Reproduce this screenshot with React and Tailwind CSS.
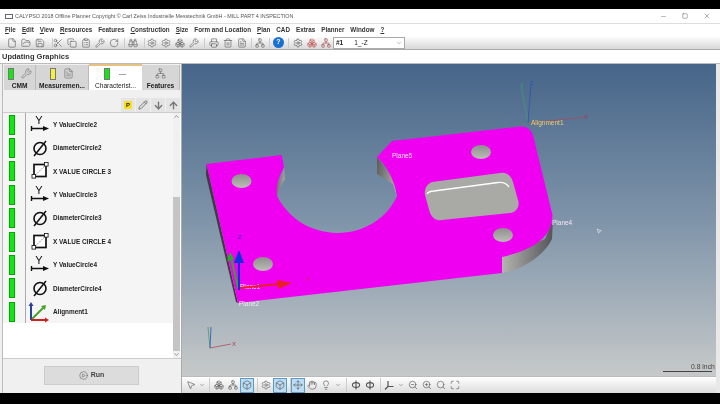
import {
  File,
  FolderOpen,
  Save,
  Scissors,
  Copy,
  ClipboardList,
  Wrench,
  Binoculars,
  Printer,
  Trash2,
  FileText,
  Network,
  Pencil,
  ArrowDown,
  ArrowUp,
  Minus,
  Square,
  X,
  ChevronDown,
  ChevronUp,
  Settings,
  Boxes,
  Box,
  Move,
  Hand,
  Lightbulb,
  ZoomIn,
  ZoomOut,
  Search,
  Maximize,
  RotateCw,
  PlayCircle,
  MousePointer2,
} from "lucide-react";

const MENU = [
  ["F", "ile", 6],
  ["E", "dit", 6],
  ["V", "iew", 6],
  ["R", "esources", 6],
  ["", "Features", 6],
  ["C", "onstruction", 6],
  ["S", "ize", 6],
  ["", "Form and Location", 6],
  ["P", "lan", 6],
  ["", "CAD", 6],
  ["", "Extras", 6],
  ["", "Planner", 6],
  ["", "Window", 6],
  ["?", "", 0],
];

const ROWS = [
  ["y", "Y ValueCircle2"],
  ["d", "DiameterCircle2"],
  ["x", "X VALUE CIRCLE 3"],
  ["y", "Y ValueCircle3"],
  ["d", "DiameterCircle3"],
  ["x", "X VALUE CIRCLE 4"],
  ["y", "Y ValueCircle4"],
  ["d", "DiameterCircle4"],
  ["a", "Alignment1"],
];

const TOP_ICONS = [
  { cls: "pr-[7px]", icons: [File, FolderOpen, Save] },
  { cls: "pr-[5px]", icons: [Scissors, Copy, ClipboardList, Wrench, RotateCw] },
  { cls: "ml-[3px] pr-[6px]", icons: [Binoculars] },
  { cls: "ml-[2px] pr-[5px]", icons: [Settings, Settings, Boxes, Wrench] },
  { cls: "ml-[4px] pr-[4px]", icons: [Printer, Trash2, FileText] },
  { cls: "ml-[3px] pr-[4px]", icons: [Network] },
];

const RowIcon = ({ kind }) => {
  if (kind === "y")
    return (
      <svg width="20" height="22" viewBox="0 0 20 22">
        <text x="9" y="10" fontSize="11" textAnchor="middle" fill="#111" fontFamily="Liberation Sans">Y</text>
        <path d="M1.5 12v5M1.5 14.5h13" stroke="#111" strokeWidth="1.4" fill="none" />
        <path d="M13 12l6 2.5-6 2.5z" fill="#111" />
      </svg>
    );
  if (kind === "d")
    return (
      <svg width="20" height="22" viewBox="0 0 20 22">
        <circle cx="10" cy="11.5" r="6" stroke="#111" strokeWidth="1.6" fill="none" />
        <path d="M4 19L16 4" stroke="#111" strokeWidth="1.5" />
      </svg>
    );
  if (kind === "x")
    return (
      <svg width="20" height="22" viewBox="0 0 20 22">
        <rect x="4" y="4.5" width="12" height="12" stroke="#111" strokeWidth="1.7" fill="#fff" />
        <path d="M6 14.5L14 6.5" stroke="#888" strokeWidth="1" strokeDasharray="1.5 1" />
        <rect x="2" y="14.5" width="3.6" height="3.6" stroke="#111" strokeWidth="0.8" fill="#fff" />
        <rect x="14.5" y="2.5" width="3.6" height="3.6" stroke="#111" strokeWidth="0.8" fill="#fff" />
      </svg>
    );
  return (
    <svg width="24" height="22" viewBox="0 0 24 22" className="-ml-[4px]">
      <path d="M5 19L18 6" stroke="#4aa02c" strokeWidth="2" />
      <path d="M15 5l5-1-1 5z" fill="#4aa02c" />
      <path d="M5 19V4" stroke="#2a3f9a" strokeWidth="2" />
      <path d="M2.5 5L5 1l2.5 4z" fill="#2a3f9a" />
      <path d="M5 19h15" stroke="#d02020" strokeWidth="2" />
      <path d="M19 16.5l4 2.5-4 2.5z" fill="#d02020" />
    </svg>
  );
};

const Tab = ({ status, icon: Icon, label, active, w }) => (
  <div
    className={`flex flex-col items-center pt-[2px] ${w} ${
      active ? "bg-white border-t-2 border-[#e8c080] h-[26px]" : "bg-[#d6d6d6] mt-[1px] h-[25px] border-r border-[#bbb]"
    }`}
  >
    <div className="flex items-center justify-center gap-[7px] h-[13px]">
      {status && <span className={`w-[6px] h-[12px] border border-[#777] ${status}`} />}
      <Icon size={11} strokeWidth={1.3} className="text-[#666]" />
    </div>
    <span className={`text-[6.6px] leading-[9px] mt-[1px] text-[#222] whitespace-nowrap ${active ? "font-normal" : "font-bold"}`}>{label}</span>
  </div>
);

const AxisSpin = () => (
  <svg width="10" height="10" viewBox="0 0 10 10" fill="none" stroke="#555" strokeWidth="1.1">
    <path d="M5 0.5v9" />
    <ellipse cx="5" cy="5" rx="3.6" ry="2.4" />
  </svg>
);

const Triad = () => (
  <svg width="10" height="10" viewBox="0 0 10 10" fill="none" stroke="#555" strokeWidth="1.2">
    <path d="M4 1v5.5M4 6.5h5.5M4 6.5L1 9.5" />
  </svg>
);

const BtmIcon = ({ icon: Icon, on }) => (
  <div className={`h-[15px] w-[14px] shrink-0 flex items-center justify-center ${on ? "bg-[#bcdcf4] border border-[#5a9cc8]" : ""}`}>
    <Icon size={10} strokeWidth={1.5} className="text-[#555]" />
  </div>
);

const Part = () => (
  <svg viewBox="182 65 534 312" className="w-full h-full">
    <defs>
      <linearGradient id="wall" x1="0" y1="0" x2="1" y2="0.4">
        <stop offset="0" stopColor="#5a5a5c" />
        <stop offset="1" stopColor="#a8a8a6" />
      </linearGradient>
      <linearGradient id="wallR" x1="0" y1="0" x2="1" y2="0">
        <stop offset="0" stopColor="#b4b4b0" />
        <stop offset="1" stopColor="#55555a" />
      </linearGradient>
      <linearGradient id="hole" x1="0" y1="0" x2="0" y2="1">
        <stop offset="0" stopColor="#8e8e8c" />
        <stop offset="1" stopColor="#bcbcb8" />
      </linearGradient>
    </defs>
    {/* far alignment axes */}
    <path d="M528 124L521 86" stroke="#3f9a70" strokeWidth="0.8" />
    <path d="M528 124L531 85" stroke="#3050b0" strokeWidth="0.8" />
    <path d="M530 124L586 118" stroke="#a04a60" strokeWidth="0.8" />
    <text x="520" y="88" fontSize="6" fill="#3f9a70" fontFamily="Liberation Sans">Y</text>
    <text x="530" y="86" fontSize="6" fill="#3050b0" fontFamily="Liberation Sans">Z</text>
    <text x="584" y="120" fontSize="6" fill="#a03a50" fontFamily="Liberation Sans">X</text>
    <text x="531" y="126" fontSize="6.5" fill="#e8d070" fontFamily="Liberation Sans">Alignment1</text>

    {/* walls */}
    <path d="M206.5 165L206 176L236 303L238 304Z" fill="#3c3c40" />
    <path d="M284 168L285 180L281 187L277 198.5L276 190Z" fill="url(#wall)" />
    <path d="M377 158L377 175L393 185L397 198L394 180Z" fill="url(#wall)" />
    <path d="M502 258L502 274C525 270 545 255 552 240L553 220L545 240Z" fill="url(#wallR)" />
    {/* top face */}
    <path
      d="M206.5 165L281.7 156L284 168C279 178 276 186 277 197C289 220 310 233 337 234C365 234 388 218 397 197C395 183 388 168 377 158L392 142L520 127.5C527 127 532 131 533.5 138L552.5 216C552 235 540 249 502 258L502 274L238 304Z"
      fill="#f000f0"
    />
    {/* holes */}
    <ellipse cx="241.5" cy="182" rx="10" ry="7" fill="url(#hole)" />
    <ellipse cx="481" cy="153" rx="10" ry="7" fill="url(#hole)" />
    <ellipse cx="503" cy="236" rx="10" ry="7" fill="url(#hole)" />
    <ellipse cx="263" cy="265" rx="10" ry="7" fill="url(#hole)" />
    {/* pocket */}
    <path
      d="M432 183C427 185 424 190 425 196L430 214C433 220 437 222 442 221L510 214C517 213 520 207 518 201L513 183C511 176 506 173 500 174Z"
      fill="#a9a9a5"
    />
    <path d="M427 195C429 192 431 192 434 192L498 183.5C503 183 507 185 509 188" stroke="#fff" strokeWidth="1.3" fill="none" />
    {/* plane labels */}
    <g fontSize="6.5" fill="#f4e8f4" fontFamily="Liberation Sans">
      <text x="392" y="159">Plane5</text>
      <text x="552" y="226">Plane4</text>
      <text x="240" y="290">Plane1</text>
      <text x="239" y="307">Plane2</text>
    </g>
    {/* near coordinate system */}
    <path d="M238.5 290L231 259" stroke="#20b020" strokeWidth="2" />
    <path d="M227 262L230 253L234 260Z" fill="#20b020" />
    <path d="M239 291V262" stroke="#1030e0" strokeWidth="2" />
    <path d="M234 264L239 251L244 264Z" fill="#1030e0" />
    <path d="M240 289L278 285" stroke="#e82020" strokeWidth="2" />
    <path d="M277 281L292 284L278 290Z" fill="#e82020" />
    <text x="238" y="240" fontSize="6" fill="#3030c0" fontFamily="Liberation Sans">Z</text>
    <text x="306" y="282" fontSize="6" fill="#d02060" fontFamily="Liberation Sans">X</text>
    {/* small triad */}
    <path d="M210 349L208 328" stroke="#3f9a70" strokeWidth="0.8" />
    <path d="M210 349L211 328" stroke="#3050b0" strokeWidth="0.8" />
    <path d="M210 349L231 345" stroke="#b04a60" strokeWidth="0.8" />
    <text x="232" y="347" fontSize="6" fill="#b03a50" fontFamily="Liberation Sans">X</text>
    {/* scale */}
    <text x="691" y="369.5" fontSize="6.8" fill="#444" fontFamily="Liberation Sans">0.8 inch</text>
    <path d="M663 372.5H712" stroke="#444" strokeWidth="1" />
  </svg>
);

const App = () => (
  <div className="w-[720px] h-[404px] bg-black flex flex-col overflow-hidden blur-[0.3px] font-['Liberation_Sans',Arial,sans-serif] text-[#222]">
    <div className="h-[9px] shrink-0" />

    {/* Title bar */}
    <div className="h-[15px] shrink-0 bg-white border-b border-[#ddd] flex items-center pl-[5px] pr-[9px]">
      <span className="w-[8px] h-[5px] border border-[#667] mr-[2px]" />
      <span className="text-[5.4px] text-[#555] whitespace-nowrap">
        CALYPSO 2018 Offline Planner Copyright © Carl Zeiss Industrielle Messtechnik GmbH - MILL PART 4 INSPECTION
      </span>
      <div className="ml-auto flex items-center gap-[15px] text-[#666]">
        <Minus size={7} strokeWidth={1.5} />
        <Square size={6} strokeWidth={2} />
        <X size={8} strokeWidth={1.5} />
      </div>
    </div>

    {/* Menu */}
    <div className="h-[12px] shrink-0 bg-white flex items-center pl-[5px] text-[6.3px] font-bold text-[#333]">
      {MENU.map(([u, rest, gap], i) => (
        <span key={i} style={{ marginRight: gap }} className="whitespace-nowrap">
          {u && <span className="underline">{u}</span>}
          {rest}
        </span>
      ))}
    </div>

    {/* Toolbar */}
    <div className="h-[14px] shrink-0 bg-gradient-to-b from-white to-[#d8d8d8] border-b border-[#aaa] flex items-center pl-[7px]">
      {TOP_ICONS.map((group, g) => (
        <div key={g} className={`flex items-center gap-[4px] border-r border-[#ccc] ${group.cls}`}>
          {group.icons.map((Icon, i) => (
            <Icon key={i} size={10} strokeWidth={1.6} className="text-[#666]" />
          ))}
        </div>
      ))}
      <div className="ml-[3px] w-[11px] h-[11px] rounded-full bg-[#1a70d0] text-white text-[7px] font-bold flex items-center justify-center">?</div>
      <div className="flex items-center gap-[4px] border-l border-[#ccc] ml-[4px] pl-[4px]">
        <Settings size={10} strokeWidth={1.6} className="text-[#555]" />
        <Boxes size={10} strokeWidth={1.6} className="text-[#c05050]" />
        <Network size={10} strokeWidth={1.6} className="text-[#a05050]" />
      </div>
      <div className="ml-[2px] w-[72px] h-[12px] bg-white border border-[#aaa] flex items-center justify-between pl-[2px] pr-[2px] text-[6.5px] font-bold">
        <span className="flex gap-[11px]">
          <span>#1</span>
          <span className="font-normal">1_-Z</span>
        </span>
        <ChevronDown size={6} className="text-[#777]" />
      </div>
    </div>

    {/* Status text */}
    <div className="h-[14px] shrink-0 bg-white border-b border-[#bbb] flex items-center pl-[2px] text-[7.5px] font-bold text-[#333]">
      Updating Graphics
    </div>

    {/* Main */}
    <div className="h-[329px] shrink-0 flex bg-[#f0f0f0]">
      {/* Left panel */}
      <div className="w-[179px] shrink-0 ml-[2px] border-l border-[#bbb] flex flex-col">
        <div className="flex h-[27px] pl-[1px] bg-[#f0f0f0] shrink-0">
          <Tab status="bg-[#10e810]" icon={Wrench} label="CMM" w="w-[32px]" />
          <Tab status="bg-[#f4f040]" icon={FileText} label="Measuremen..." w="w-[53px]" />
          <Tab status="bg-[#10e810]" icon={Minus} label="Characterist..." active w="w-[53px]" />
          <Tab icon={Network} label="Features" w="w-[38px]" />
        </div>
        <div className="h-[21px] shrink-0 flex items-end justify-end gap-[1px] pr-[1px] bg-[#f0f0f0]">
          <div className="w-[14px] h-[14px] bg-[#e4e4e4] flex items-center justify-center">
            <span className="w-[8px] h-[8px] bg-[#f4e020] text-[6px] font-bold leading-[8px] text-center">P</span>
          </div>
          <div className="w-[14px] h-[14px] bg-[#e4e4e4] flex items-center justify-center">
            <Pencil size={10} className="text-[#666]" />
          </div>
          <div className="w-[14px] h-[14px] bg-[#e4e4e4] flex items-center justify-center">
            <ArrowDown size={11} strokeWidth={3} className="text-[#777]" />
          </div>
          <div className="w-[14px] h-[14px] bg-[#e4e4e4] flex items-center justify-center">
            <ArrowUp size={11} strokeWidth={3} className="text-[#777]" />
          </div>
        </div>

        {/* List */}
        <div className="h-[247px] shrink-0 flex bg-white border-t border-b border-[#ccc]">
          <div className="flex-1 flex flex-col items-stretch">
            <div className="bg-[#f5f5f5] h-[210px] pl-[6px]">
              {ROWS.map(([kind, label]) => (
                <div key={label} className="h-[23.4px] flex items-center">
                  <span className="w-[6px] h-[20px] bg-[#10e810] border border-[#0a0] shrink-0" />
                  <div className="ml-[10px] border-l border-[#aaa] h-full pl-[4px] flex items-center">
                    <RowIcon kind={kind} />
                  </div>
                  <span className="ml-[3px] text-[6.4px] font-bold text-[#222] whitespace-nowrap">{label}</span>
                </div>
              ))}
            </div>
            <div className="flex-1 bg-white" />
          </div>
          <div className="w-[7px] mr-[1px] shrink-0 bg-[#f0f0f0] flex flex-col items-center">
            <ChevronUp size={7} className="text-[#555] shrink-0" />
            <div className="h-[77px] shrink-0" />
            <div className="w-full flex-1 bg-[#c4c4c4]" />
            <ChevronDown size={7} className="text-[#555] shrink-0" />
          </div>
        </div>

        {/* Run */}
        <div className="flex-1 flex justify-center pt-[7px] pr-[1px]">
          <div className="w-[95px] h-[19px] bg-[#dcdcdc] border border-[#ccc] flex items-center justify-center gap-[3px] text-[7px] font-bold text-[#444]">
            <PlayCircle size={9} strokeWidth={1.4} className="text-[#555]" />
            Run
          </div>
        </div>
      </div>

      {/* Viewport */}
      <div className="w-[535px] shrink-0 flex flex-col border-l border-[#aaa]">
        <div className="h-[312px] shrink-0 relative bg-gradient-to-b from-[#466589] via-[#7f94a9] to-[#c6c9c9]">
          <Part />
          <MousePointer2 size={6} className="absolute left-[414px] top-[164px] text-white" />
        </div>
        <div className="flex-1 bg-gradient-to-b from-white to-[#dcdcdc] border-t border-[#bbb] flex items-center pl-[2px]">
          <BtmIcon icon={MousePointer2} />
          <ChevronDown size={6} className="text-[#666] mx-[1px] shrink-0" />
          <span className="h-[14px] border-l border-[#ccc] ml-[3px] mr-[2px]" />
          <BtmIcon icon={Boxes} />
          <BtmIcon icon={Network} />
          <BtmIcon icon={Box} on />
          <span className="h-[14px] border-l border-[#ccc] ml-[3px] mr-[1px]" />
          <BtmIcon icon={Settings} />
          <BtmIcon icon={Box} on />
          <span className="h-[14px] border-l border-[#ccc] ml-[3px]" />
          <BtmIcon icon={Move} on />
          <BtmIcon icon={Hand} />
          <BtmIcon icon={Lightbulb} />
          <ChevronDown size={6} className="text-[#666] mx-[2px] shrink-0" />
          <span className="h-[14px] border-l border-[#ccc] ml-[3px] mr-[2px]" />
          <BtmIcon icon={AxisSpin} />
          <BtmIcon icon={AxisSpin} />
          <span className="h-[14px] border-l border-[#ccc] ml-[3px] mr-[1px]" />
          <BtmIcon icon={Triad} />
          <ChevronDown size={6} className="text-[#666] mx-[2px] shrink-0" />
          <BtmIcon icon={ZoomOut} />
          <BtmIcon icon={ZoomIn} />
          <BtmIcon icon={Search} />
          <BtmIcon icon={Maximize} />
        </div>
      </div>
      <div className="flex-1 bg-[#e8e8e8]" />
    </div>
    <div className="flex-1" />
  </div>
);

export default App;
